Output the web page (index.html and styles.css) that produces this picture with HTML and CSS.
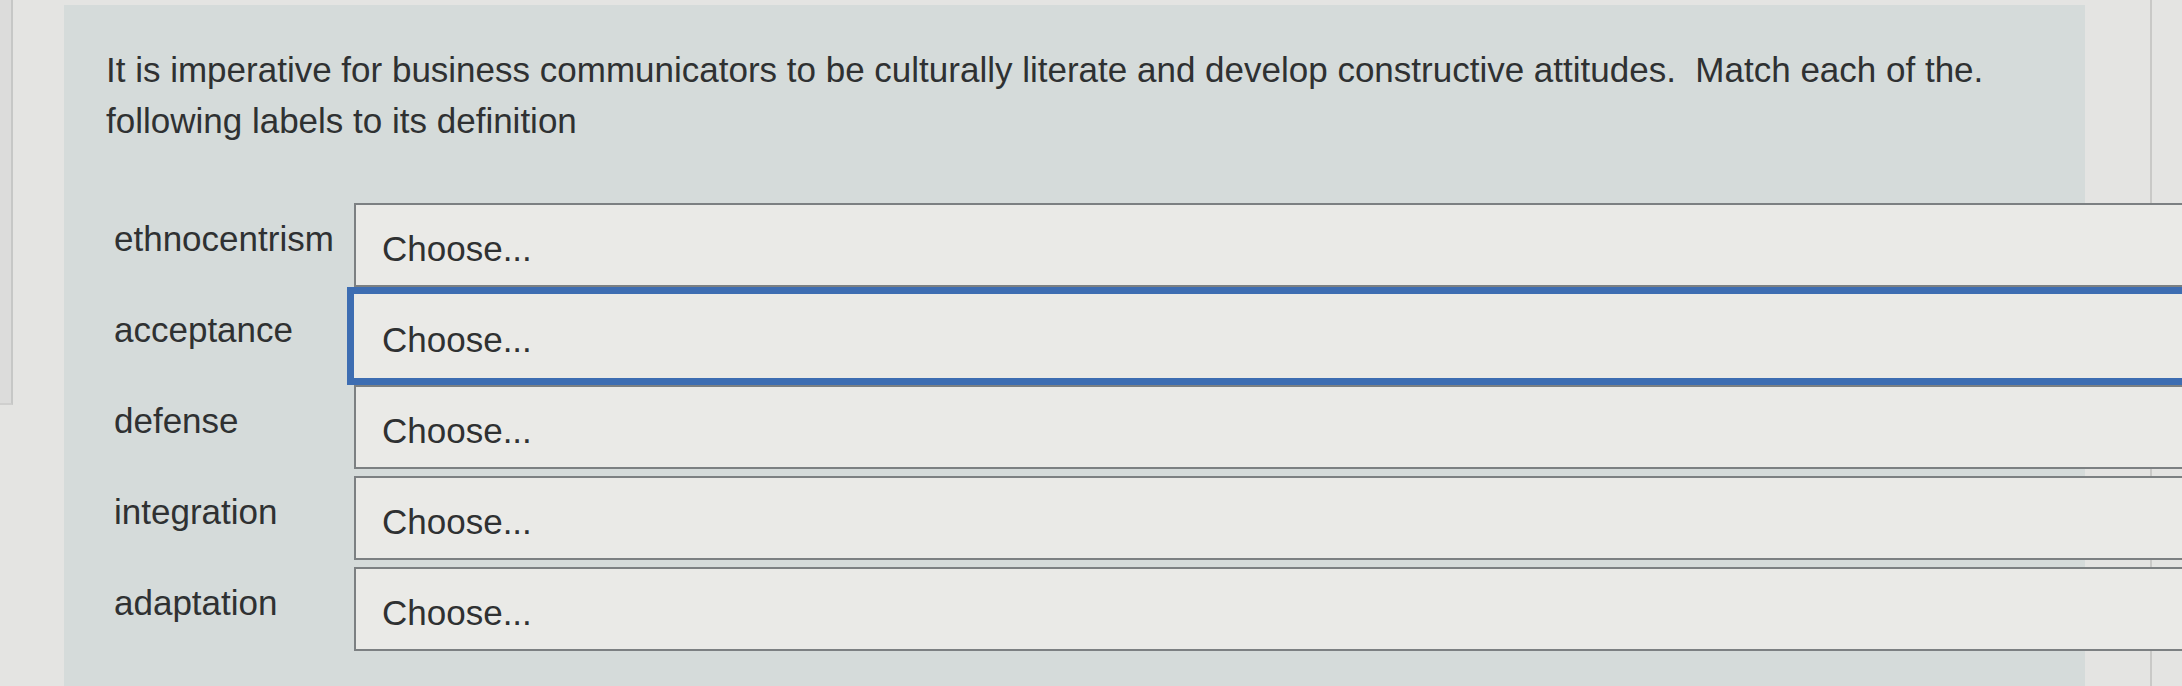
FILE: index.html
```html
<!DOCTYPE html>
<html lang="en">
<head>
    <meta charset="UTF-8">
    <meta name="viewport" content="width=device-width, initial-scale=1.0">
    <title>Matching question</title>
    <link rel="stylesheet" href="styles.css">
</head>
<body>
    <div class="page">
        <div class="side-nav"></div>

        <div class="question">
            <p class="question-text">It is imperative for business communicators to be culturally literate and develop constructive attitudes.&nbsp; Match each of the. following labels to its definition</p>

            <div class="match-list">
                <div class="match-row">
                    <label for="m1">ethnocentrism</label>
                    <select id="m1"><option>Choose...</option></select>
                </div>
                <div class="match-row">
                    <label for="m2">acceptance</label>
                    <select id="m2" class="is-focused"><option>Choose...</option></select>
                </div>
                <div class="match-row">
                    <label for="m3">defense</label>
                    <select id="m3"><option>Choose...</option></select>
                </div>
                <div class="match-row">
                    <label for="m4">integration</label>
                    <select id="m4"><option>Choose...</option></select>
                </div>
                <div class="match-row">
                    <label for="m5">adaptation</label>
                    <select id="m5"><option>Choose...</option></select>
                </div>
            </div>
        </div>

        <div class="side-rail"></div>
    </div>
</body>
</html>
```

FILE: styles.css
```css
body {
    margin: 0;
    font-family: "Liberation Sans", Arial, sans-serif;
    background-color: #e4e4e2;
    color: #2f3132;
    overflow: hidden;
    height: 686px;
}
.page {
    display: flex;
    align-items: flex-start;
}
.side-nav {
    flex: 0 0 11px;
    height: 403px;
    background-color: #dcdcdb;
    border-right: 2px solid #c6c7c6;
    border-bottom: 2px solid #cfcfce;
}
/* the selects run on past the right edge of this box */
.question {
    position: relative;
    z-index: 1;
    flex: 0 0 2021px;
    min-width: 0;
    margin-left: 51px;
    margin-top: 5px;
    padding: 39px 42px 60px;
    box-sizing: border-box;
    background-color: #d5dbda;
}
.question-text {
    margin: 0;
    font-size: 35px;
    line-height: 51px;
}
.match-list {
    margin-top: 57px;
    margin-left: 8px;
}
.match-row {
    display: grid;
    grid-template-columns: 240px auto;
    margin-bottom: 7px;
}
.match-row label {
    font-size: 35px;
    line-height: 51px;
    padding-top: 10px;
}
.match-row select {
    appearance: none;
    -webkit-appearance: none;
    width: 1840px;
    height: 84px;
    padding: 6px 26px 0;
    font-family: "Liberation Sans", Arial, sans-serif;
    font-size: 35px;
    color: #2f3132;
    background-color: #eaeae7;
    border: 2px solid #7c8082;
    border-radius: 0;
}
.match-row select.is-focused {
    border-color: #eaeae7;
    outline: 7px solid #3d6db2;
}
.side-rail {
    flex: 0 0 65px;
    height: 686px;
    border-right: 2px solid #c9c9c7;
}
```
